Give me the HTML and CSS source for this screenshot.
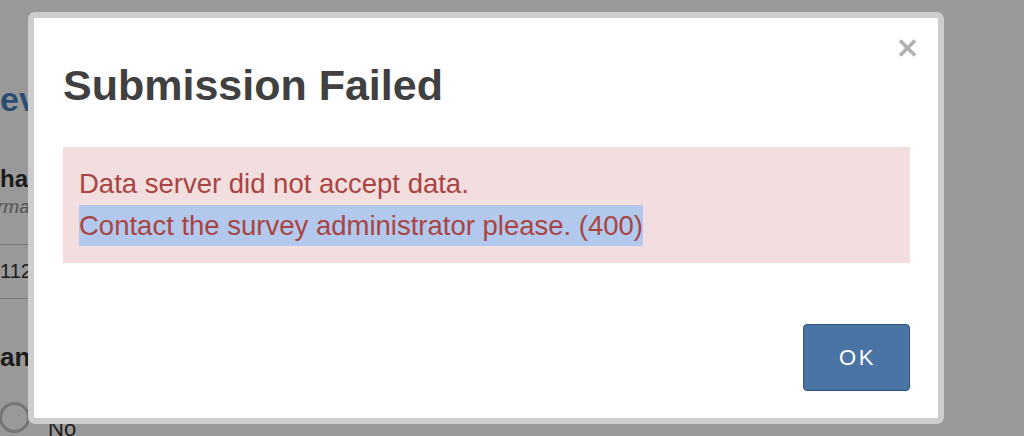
FILE: index.html
```html
<!DOCTYPE html>
<html lang="en">
<head>
<meta charset="utf-8">
<title>Submission Failed</title>
<link rel="stylesheet" href="styles.css">
</head>
<body>
<main class="page">
  <h1 class="form-title">eview</h1>
  <section class="question">
    <p class="q-label">hat</p>
    <p class="q-hint">rmat</p>
    <div class="q-input">1125550100</div>
  </section>
  <section class="question">
    <p class="q-label big">any</p>
    <label class="radio-row"><span class="radio"></span><span class="radio-text">No</span></label>
  </section>
</main>

<div class="backdrop"></div>

<div class="modal" role="dialog" aria-labelledby="modal-title">
  <div class="modal-content">
    <button class="close" aria-label="Close">
      <svg width="19" height="18" viewBox="0 0 19 18"><path d="M2 1.5 L17 16.5 M17 1.5 L2 16.5" stroke="#b0b0b0" stroke-width="3.6" fill="none"/></svg>
    </button>
    <header class="modal-header">
      <h2 id="modal-title" class="modal-title">Submission Failed</h2>
    </header>
    <div class="alert">
      <div class="alert-line">Data server did not accept data.</div>
      <div class="alert-line"><span class="selected">Contact the survey administrator please. (400)</span></div>
    </div>
    <footer class="modal-footer">
      <button class="btn-ok">OK</button>
    </footer>
  </div>
</div>
</body>
</html>
```

FILE: styles.css
```css
html, body {
  margin: 0;
  padding: 0;
}
body {
  width: 1024px;
  height: 436px;
  overflow: hidden;
  background: #ffffff;
  font-family: "Liberation Sans", Arial, sans-serif;
  position: relative;
}

/* background form page (only its left edge shows beside the dialog) */
.page {
  width: 100px;
  height: 436px;
  overflow: hidden;
  padding-top: 79px;
  box-sizing: border-box;
  white-space: nowrap;
}
.form-title {
  margin: 0;
  font-size: 34px;
  line-height: 40px;
  font-weight: bold;
  color: #4880c1;
}
.question {
  margin-top: 47px;
}
.q-label {
  margin: 0;
  font-size: 24px;
  line-height: 26px;
  font-weight: bold;
  color: #2e2e2e;
}
.q-hint {
  margin: 3px 0 0;
  font-size: 19px;
  line-height: 24px;
  font-style: italic;
  color: #888888;
  text-indent: -3px;
}
.q-input {
  margin-top: 25px;
  border-top: 1px solid #c8c8c8;
  border-bottom: 1px solid #c8c8c8;
  padding: 14px 0 15px;
  font-size: 20px;
  line-height: 24px;
  color: #333333;
}
.question + .question {
  margin-top: 43px;
}
.q-label.big {
  font-size: 26px;
  line-height: 30px;
}
.radio-row {
  display: flex;
  align-items: flex-start;
  gap: 18px;
  margin-top: 30px;
}
.radio {
  flex: none;
  width: 25px;
  height: 25px;
  border: 3px solid #c4c4c4;
  border-radius: 50%;
  margin-left: -1px;
}
.radio-text {
  font-size: 22px;
  line-height: 26px;
  margin-top: 14px;
  color: #333333;
}

/* overlay */
.backdrop {
  position: absolute;
  inset: 0;
  background: rgba(0, 0, 0, 0.4);
}

/* modal */
.modal {
  position: absolute;
  left: 28px;
  top: 12px;
  width: 904px;
  height: 400px;
  border: 6px solid #cdcdcd;
  border-radius: 7px;
  background: #ffffff;
}
.modal-content {
  position: relative;
  height: 100%;
  box-sizing: border-box;
  padding: 43px 28px 27px 29px;
  display: flex;
  flex-direction: column;
}
.close {
  position: absolute;
  top: 21px;
  right: 21px;
  width: 19px;
  height: 18px;
  padding: 0;
  border: 0;
  background: none;
  line-height: 0;
  cursor: pointer;
}
.modal-header {
  margin: 0;
}
.modal-title {
  margin: 0;
  font-size: 43px;
  line-height: 48px;
  font-weight: bold;
  color: #404040;
}
.alert {
  margin-top: 38px;
  background: #f2dede;
  color: #a94442;
  padding: 16px 16px;
  font-size: 27.5px;
  line-height: 42px;
}
.alert-line {
  height: 42px;
  white-space: nowrap;
}
.selected {
  display: inline-block;
  background: #b2c8ec;
  height: 41px;
}
.modal-footer {
  margin-top: auto;
  display: flex;
  justify-content: flex-end;
}
.btn-ok {
  width: 107px;
  height: 67px;
  background: #4a74a3;
  border: 1px solid #2d5381;
  border-radius: 4px;
  color: #ffffff;
  font-family: "Liberation Sans", Arial, sans-serif;
  font-size: 22px;
  letter-spacing: 2.5px;
  padding: 0 0 0 2px;
  cursor: pointer;
}
```
